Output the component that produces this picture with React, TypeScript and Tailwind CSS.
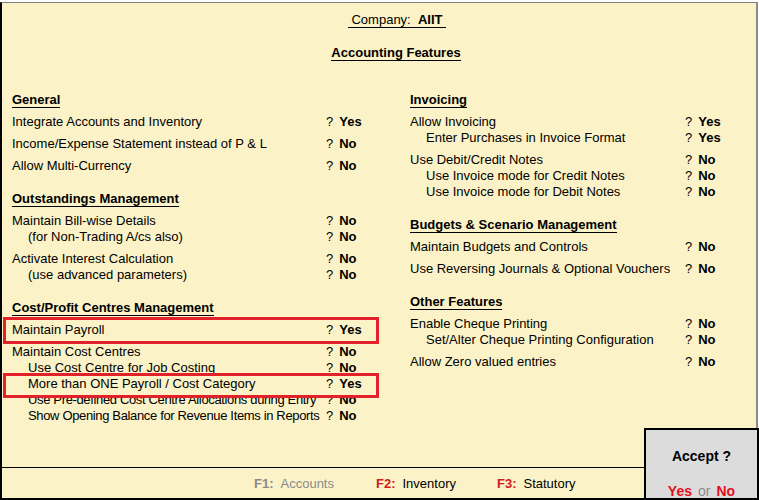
type Line = { label: string; value: string; sub?: boolean; tight?: boolean };
type Section = { title: string; groups: Line[][] };

const leftSections: Section[] = [
  {
    title: 'General',
    groups: [
      [{ label: 'Integrate Accounts and Inventory', value: 'Yes' }],
      [{ label: 'Income/Expense Statement instead of P & L', value: 'No' }],
      [{ label: 'Allow Multi-Currency', value: 'No' }],
    ],
  },
  {
    title: 'Outstandings Management',
    groups: [
      [
        { label: 'Maintain Bill-wise Details', value: 'No' },
        { label: '(for Non-Trading A/cs also)', value: 'No', sub: true },
      ],
      [
        { label: 'Activate Interest Calculation', value: 'No' },
        { label: '(use advanced parameters)', value: 'No', sub: true },
      ],
    ],
  },
  {
    title: 'Cost/Profit Centres Management',
    groups: [
      [{ label: 'Maintain Payroll', value: 'Yes' }],
      [
        { label: 'Maintain Cost Centres', value: 'No' },
        { label: 'Use Cost Centre for Job Costing', value: 'No', sub: true },
        { label: 'More than ONE Payroll / Cost Category', value: 'Yes', sub: true },
        { label: 'Use Pre-defined Cost Centre Allocations during Entry', value: 'No', sub: true, tight: true },
        { label: 'Show Opening Balance for Revenue Items in Reports', value: 'No', sub: true, tight: true },
      ],
    ],
  },
];

const rightSections: Section[] = [
  {
    title: 'Invoicing',
    groups: [
      [
        { label: 'Allow Invoicing', value: 'Yes' },
        { label: 'Enter Purchases in Invoice Format', value: 'Yes', sub: true },
      ],
      [
        { label: 'Use Debit/Credit Notes', value: 'No' },
        { label: 'Use Invoice mode for Credit Notes', value: 'No', sub: true },
        { label: 'Use Invoice mode for Debit Notes', value: 'No', sub: true },
      ],
    ],
  },
  {
    title: 'Budgets & Scenario Management',
    groups: [
      [{ label: 'Maintain Budgets and Controls', value: 'No' }],
      [{ label: 'Use Reversing Journals & Optional Vouchers', value: 'No' }],
    ],
  },
  {
    title: 'Other Features',
    groups: [
      [
        { label: 'Enable Cheque Printing', value: 'No' },
        { label: 'Set/Alter Cheque Printing Configuration', value: 'No', sub: true },
      ],
      [{ label: 'Allow Zero valued entries', value: 'No' }],
    ],
  },
];

function Column({ sections, side }: { sections: Section[]; side: 'left' | 'right' }) {
  return (
    <div className="flex flex-col">
      {sections.map((section, si) => (
        <div key={section.title} className={si === 0 ? '' : 'mt-[16px]'}>
          <div className="h-[16px]">
            <span className="inline-block border-b border-black font-bold leading-[15px]">
              {section.title}
            </span>
          </div>
          {section.groups.map((group, gi) => (
            <div key={gi} className={gi === 0 ? 'mt-[7px]' : 'mt-[6px]'}>
              {group.map((line) => (
                <div key={line.label} className="flex h-[16px] items-center leading-[17px] whitespace-nowrap">
                  <div
                    className={
                      (side === 'left' ? 'w-[314px]' : 'w-[275px]') +
                      (line.sub ? ' pl-[16px]' : '') +
                      (line.tight ? ' tracking-[-0.35px]' : '')
                    }
                  >
                    {line.label}
                  </div>
                  <span>?</span>
                  <span className="ml-[6px] font-bold">{line.value}</span>
                </div>
              ))}
            </div>
          ))}
        </div>
      ))}
    </div>
  );
}

export default function App() {
  return (
    <div className="relative h-[500px] w-[759px] overflow-hidden bg-white font-['Liberation_Sans',Arial,sans-serif] text-[13px] text-black">
      <div className="mt-[2px] flex h-[498px] w-[758px] flex-col border-t border-b-2 border-l-2 border-r-2 border-t-[#7f7f7f] border-b-black border-l-black border-r-[#8c8c8c] bg-[#fbf3c7]">
        {/* header */}
        <div className="flex flex-col items-center pl-[34px] pt-[7px]">
          <div className="h-[16px] pl-[2px]">
            <span className="inline-block border-b border-black px-[3px] leading-[15px]">
              Company:&nbsp; <span className="font-bold">AIIT</span>
            </span>
          </div>
          <div className="mt-[17px] h-[16px]">
            <span className="inline-block border-b border-black font-bold leading-[15px]">
              Accounting Features
            </span>
          </div>
        </div>

        {/* features */}
        <div className="mt-[31px] grid flex-1 grid-cols-[398px_1fr] pl-[10px]">
          <Column sections={leftSections} side="left" />
          <Column sections={rightSections} side="right" />
        </div>

        {/* footer */}
        <div className="flex h-[31px] items-center border-t border-black pl-[252px] pt-[2px]">
          <div className="w-[122px] text-[#8a8a8a]">
            <span className="font-bold">F1:</span>
            <span className="ml-[7px]">Accounts</span>
          </div>
          <div className="w-[121px]">
            <span className="font-bold text-[#d21b1b]">F2:</span>
            <span className="ml-[7px]">Inventory</span>
          </div>
          <div>
            <span className="font-bold text-[#d21b1b]">F3:</span>
            <span className="ml-[7px]">Statutory</span>
          </div>
        </div>
      </div>

      {/* highlight boxes */}
      <div className="absolute left-[3px] top-[317px] h-[27px] w-[376px] border-[3px] border-[#e3212b]" />
      <div className="absolute left-[3px] top-[373px] h-[25px] w-[376px] border-[3px] border-[#e3212b]" />

      {/* accept prompt */}
      <div className="absolute left-[644px] top-[428px] flex h-[72px] w-[115px] flex-col items-center border-2 border-black bg-[#dcdcdc] text-[14px] font-bold">
        <div className="mt-[18px] leading-[16px]">Accept ?</div>
        <div className="mt-[19px] leading-[16px]">
          <span className="text-[#e3101e]">Yes</span>
          <span className="mx-[6px] font-normal text-[#8a8a8a]">or</span>
          <span className="text-[#e3101e]">No</span>
        </div>
      </div>
    </div>
  );
}
